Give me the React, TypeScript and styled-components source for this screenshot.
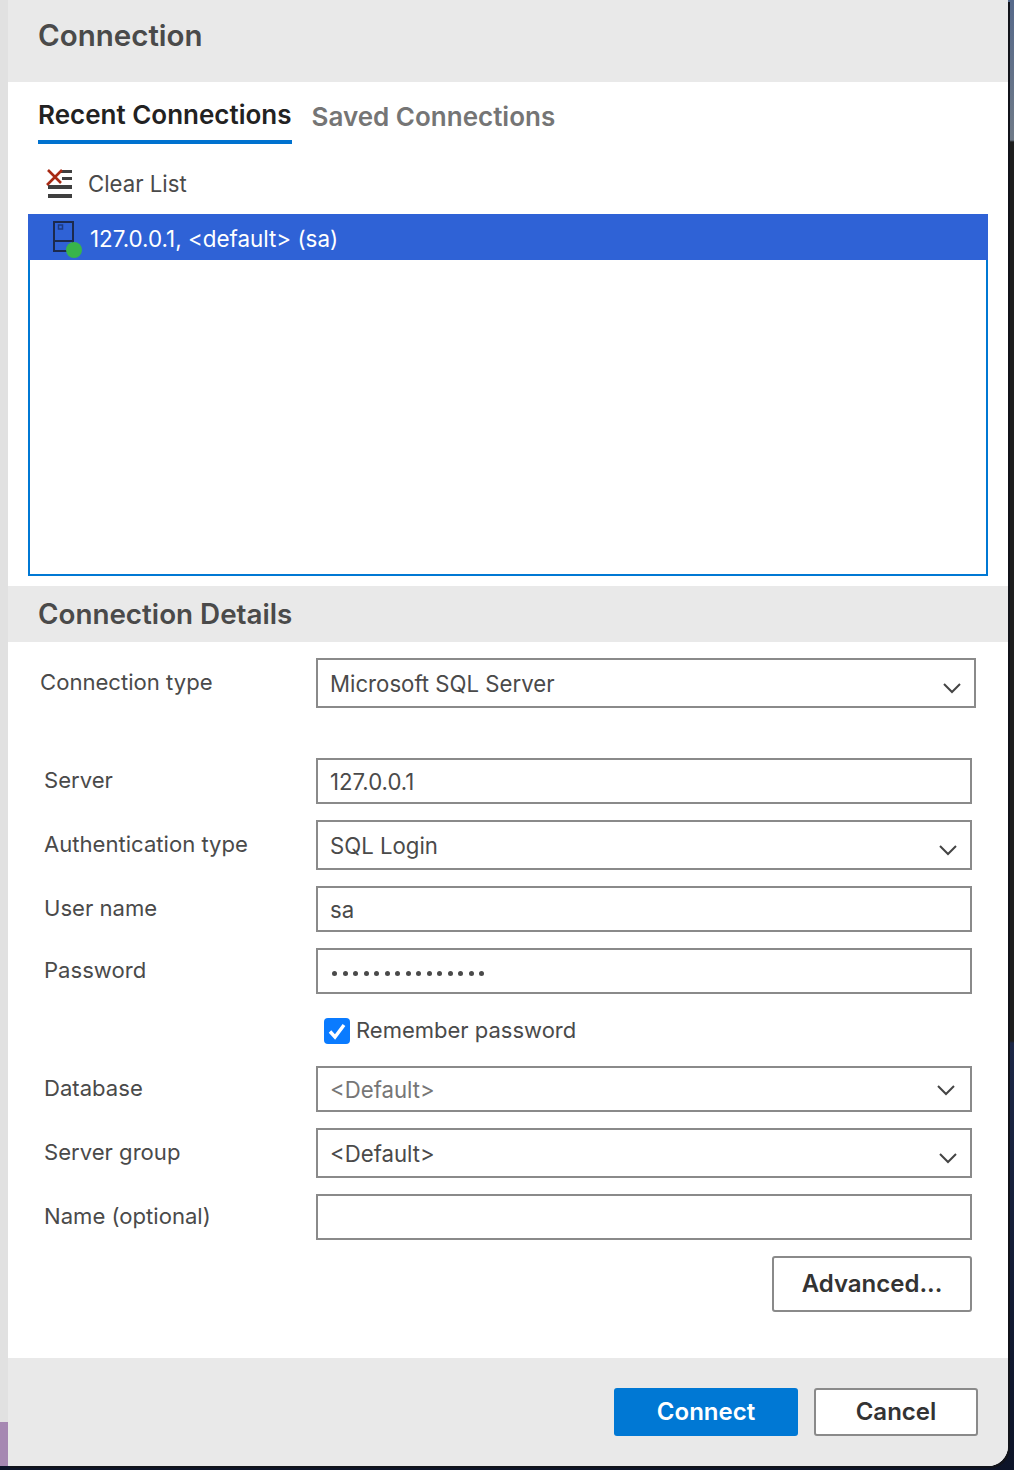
import styled, { createGlobalStyle } from "styled-components";

const GlobalStyle = createGlobalStyle`
    html, body {
        margin: 0;
        padding: 0;
        background: #0d1428;
    }

    body {
        font-family: Inter, "Liberation Sans", sans-serif;
        -webkit-font-smoothing: antialiased;
    }
`;

const Screen = styled.div`
    width: 1014px;
    height: 1470px;
    display: flex;
    overflow: hidden;
    background: linear-gradient(
        180deg,
        #56698a 0,
        #6f7a88 140px,
        #1e1e1e 142px,
        #1e1e1e 1041px,
        #1c2746 1043px,
        #0d1428 100%
    );
`;

const BehindStrip = styled.div`
    width: 8px;
    height: 1466px;
    display: flex;
    flex-direction: column;
    justify-content: flex-end;
    background: #e1e1e1;
`;

const BehindAccent = styled.div`
    height: 44px;
    background: #a688b2;
`;

const Dialog = styled.div`
    width: 1000px;
    height: 1466px;
    display: flex;
    flex-direction: column;
    background: #fff;
    border-bottom-right-radius: 20px;
    overflow: hidden;
    box-shadow: 2px 2px 0 #11131a;
`;

const Header = styled.header`
    height: 82px;
    box-sizing: border-box;
    padding: 17px 0 0 30px;
    background: #e9e9e9;
    color: #4a4a4a;
    font-size: 29.5px;
    font-weight: 600;
    line-height: 36px;
`;

const Tabs = styled.div`
    height: 62px;
    box-sizing: border-box;
    padding-left: 30px;
    display: flex;
    gap: 20px;
`;

const Tab = styled.div<{ $active?: boolean }>`
    height: 62px;
    box-sizing: border-box;
    border-bottom: 4px solid ${({ $active }) => ($active ? "#0072cf" : "transparent")};
    color: ${({ $active }) => ($active ? "#222" : "#757575")};
    font-size: 26px;
    font-weight: 600;
    line-height: 32px;
    padding-top: ${({ $active }) => ($active ? "17px" : "19px")};
    white-space: nowrap;
`;

const ClearRow = styled.div`
    height: 70px;
    box-sizing: border-box;
    padding: 8px 0 0 37px;
    display: flex;
    align-items: center;
    gap: 15px;
    color: #4a4a4a;
    font-size: 22.2px;
`;

const ListBox = styled.div`
    margin-left: 20px;
    width: 960px;
    height: 362px;
    box-sizing: border-box;
    border: 2px solid #0078d4;
    border-top: 0;
`;

const SelectedRow = styled.div`
    height: 46px;
    box-sizing: border-box;
    margin: 0 -2px;
    padding: 2px 0 0 24px;
    display: flex;
    align-items: center;
    gap: 6px;
    background: #2f62d6;
    color: #fff;
    font-size: 22.4px;
`;

const SectionTitle = styled.div`
    margin-top: 10px;
    height: 56px;
    box-sizing: border-box;
    padding: 10px 0 0 30px;
    background: #e9e9e9;
    color: #4a4a4a;
    font-size: 27.8px;
    font-weight: 600;
    line-height: 36px;
`;

const Form = styled.div`
    flex: 1;
    display: flex;
    flex-direction: column;
    padding-top: 16px;
`;

const FieldRow = styled.div<{ $after?: number; $wide?: boolean }>`
    display: flex;
    align-items: center;
    padding-left: ${({ $wide }) => ($wide ? "32px" : "36px")};
    margin-bottom: ${({ $after }) => $after ?? 16}px;
`;

const Label = styled.div<{ $wide?: boolean }>`
    width: ${({ $wide }) => ($wide ? "276px" : "272px")};
    flex: none;
    margin-top: -2px;
    color: #4a4a4a;
    font-size: 22.1px;
    line-height: 30px;
`;

const Field = styled.div<{ $h: number; $wide?: boolean; $muted?: boolean }>`
    width: ${({ $wide }) => ($wide ? "660px" : "656px")};
    height: ${({ $h }) => $h}px;
    box-sizing: border-box;
    flex: none;
    border: 2px solid #8a8a8a;
    padding: 0 12px;
    display: flex;
    align-items: center;
    justify-content: space-between;
    color: ${({ $muted }) => ($muted ? "#767676" : "#4a4a4a")};
    font-size: 22.2px;
`;

const PasswordDots = styled.span`
    margin: 4px 0 0 2px;
    display: flex;
    gap: 5.52px;
`;

const Dot = styled.span`
    width: 5px;
    height: 5px;
    border-radius: 50%;
    background: #4a4a4a;
`;

const CheckRow = styled.div`
    height: 26px;
    margin: 0 0 22px 316px;
    display: flex;
    align-items: center;
    gap: 6px;
    color: #4a4a4a;
    font-size: 22px;
`;

const CheckLabel = styled.span`
    margin-top: -2px;
`;

const CheckBox = styled.span`
    width: 26px;
    height: 26px;
    border-radius: 4px;
    background: #0a7bff;
    display: flex;
    align-items: center;
    justify-content: center;
`;

const AdvancedRow = styled.div`
    display: flex;
    justify-content: flex-end;
    padding-right: 36px;
`;

const OutlineButton = styled.button<{ $w: number; $h: number }>`
    width: ${({ $w }) => $w}px;
    height: ${({ $h }) => $h}px;
    box-sizing: border-box;
    border: 2px solid #8a8a8a;
    border-radius: 3px;
    background: #fff;
    color: #333;
    font-family: inherit;
    font-size: 24px;
    font-weight: 600;
    padding: 0 0 2px;
`;

const Footer = styled.footer`
    height: 108px;
    box-sizing: border-box;
    padding: 30px 30px 0 0;
    background: #e9e9e9;
    display: flex;
    justify-content: flex-end;
    gap: 16px;
`;

const PrimaryButton = styled.button`
    width: 184px;
    height: 48px;
    border: 0;
    border-radius: 3px;
    background: #0078d4;
    color: #fff;
    font-family: inherit;
    font-size: 24px;
    font-weight: 600;
    padding: 0 0 2px;
`;

const ChevronSvg = styled.svg<{ $flat?: boolean }>`
    margin-top: ${({ $flat }) => ($flat ? "2px" : "10px")};
    margin-right: ${({ $flat }) => ($flat ? "2px" : "0")};
`;

function ClearListIcon() {
    return (
        <svg width="28" height="31" viewBox="0 0 28 31">
            <path d="M16 2h11v3H16zM17 9h10v3H17zM3 17h24v4H3zM3 26h24v4H3z" fill="#3f3f3f" />
            <path d="M2 17 17 2M3 2l13 13" stroke="#a82a14" strokeWidth="2.600" fill="none" />
        </svg>
    );
}

function ServerIcon() {
    return (
        <svg width="32" height="40" viewBox="0 0 32 40">
            <path d="M2 4h19v29H2zM2 23h19" stroke="#1c2a4e" strokeWidth="2" fill="none" />
            <path d="M6.500 7h4v4h-4z" stroke="#1c3a80" strokeWidth="1.500" fill="none" />
            <circle cx="22" cy="32" r="8" fill="#38b44a" />
        </svg>
    );
}

function Chevron({ flat }: { flat?: boolean }) {
    return (
        <ChevronSvg $flat={flat} width="20" height="12" viewBox="0 0 20 12">
            <path d="M2 2l8 8 8-8" stroke="#444" strokeWidth="2" fill="none" />
        </ChevronSvg>
    );
}

function App() {
    return (
        <>
            <GlobalStyle />
            <Screen>
                <BehindStrip>
                    <BehindAccent />
                </BehindStrip>
                <Dialog>
                    <Header>Connection</Header>
                    <Tabs>
                        <Tab $active>Recent Connections</Tab>
                        <Tab>Saved Connections</Tab>
                    </Tabs>
                    <ClearRow>
                        <ClearListIcon />
                        Clear List
                    </ClearRow>
                    <ListBox>
                        <SelectedRow>
                            <ServerIcon />
                            127.0.0.1, &lt;default&gt; (sa)
                        </SelectedRow>
                    </ListBox>
                    <SectionTitle>Connection Details</SectionTitle>
                    <Form>
                        <FieldRow $wide $after={50}>
                            <Label $wide>Connection type</Label>
                            <Field $h={50} $wide>
                                Microsoft SQL Server
                                <Chevron />
                            </Field>
                        </FieldRow>
                        <FieldRow>
                            <Label>Server</Label>
                            <Field $h={46}>127.0.0.1</Field>
                        </FieldRow>
                        <FieldRow>
                            <Label>Authentication type</Label>
                            <Field $h={50}>
                                SQL Login
                                <Chevron />
                            </Field>
                        </FieldRow>
                        <FieldRow>
                            <Label>User name</Label>
                            <Field $h={46}>sa</Field>
                        </FieldRow>
                        <FieldRow $after={24}>
                            <Label>Password</Label>
                            <Field $h={46}>
                                <PasswordDots>
                                    {Array.from({ length: 15 }, (_, i) => (
                                        <Dot key={i} />
                                    ))}
                                </PasswordDots>
                            </Field>
                        </FieldRow>
                        <CheckRow>
                            <CheckBox>
                                <svg width="20" height="18" viewBox="0 0 20 18">
                                    <path d="M3 9.500 8 15 17 3" stroke="#fff" strokeWidth="3.400" fill="none" />
                                </svg>
                            </CheckBox>
                            <CheckLabel>Remember password</CheckLabel>
                        </CheckRow>
                        <FieldRow>
                            <Label>Database</Label>
                            <Field $h={46} $muted>
                                &lt;Default&gt;
                                <Chevron flat />
                            </Field>
                        </FieldRow>
                        <FieldRow>
                            <Label>Server group</Label>
                            <Field $h={50}>
                                &lt;Default&gt;
                                <Chevron />
                            </Field>
                        </FieldRow>
                        <FieldRow>
                            <Label>Name (optional)</Label>
                            <Field $h={46} />
                        </FieldRow>
                        <AdvancedRow>
                            <OutlineButton $w={200} $h={56}>Advanced...</OutlineButton>
                        </AdvancedRow>
                    </Form>
                    <Footer>
                        <PrimaryButton>Connect</PrimaryButton>
                        <OutlineButton $w={164} $h={48}>Cancel</OutlineButton>
                    </Footer>
                </Dialog>
            </Screen>
        </>
    );
}

export default App;
